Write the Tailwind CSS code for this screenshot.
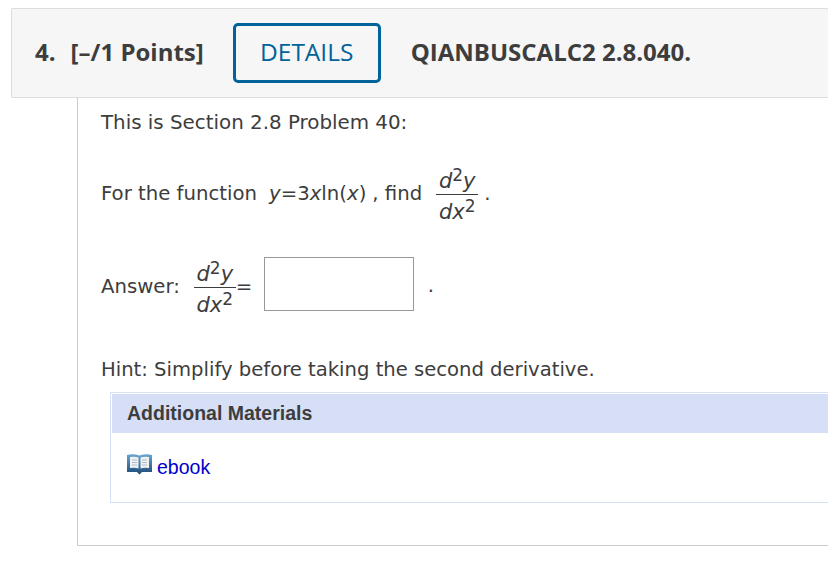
<!DOCTYPE html>
<html lang="en">
<head>
  <meta charset="UTF-8">
  <title>Question 4</title>
  <script src="https://cdn.jsdelivr.net/npm/@tailwindcss/browser@4"></script>
</head>

<body class="bg-white overflow-hidden h-[571px] w-[828px] text-[#3d3d3d] font-['DejaVu_Sans',sans-serif]">
  <div class="w-full pt-2 pl-[11px]">
    <header class="h-[90px] bg-[#f6f6f6] border border-r-0 border-[#dddddd] rounded-l-[2px] flex items-center pl-[23px] font-['Open_Sans',sans-serif] font-bold text-[24px]">
      <span class="-mt-[2px]">4.</span>
      <span class="ml-[15px] -mt-[2px]">[–/1 Points]</span>
      <button class="ml-[29px] w-[148px] h-[60px] -mt-[1px] border-[3px] border-[#00639a] rounded-[5px] text-[#00639a] font-normal text-[24.5px]">DETAILS</button>
      <span class="ml-[30px] -mt-[2px]">QIANBUSCALC2 2.8.040.</span>
    </header>

    <main class="ml-[66px] h-[448px] border-l border-b border-[#cccccc] pl-[23px] text-[19.7px]">
      <p class="pt-[11px] h-[48px] leading-[28px] text-[19.85px]">This is Section 2.8 Problem 40:</p>

      <div class="mt-[18px] h-[60px] flex items-center">
        <span>For the function</span>
        <span class="ml-[12px]"><i>y</i>=3<i>x</i>ln(<i>x</i>)</span>
        <span class="ml-[6px]">, find</span>
        <span class="ml-[14px] mt-[4px] w-[42px] shrink-0 flex flex-col items-center leading-[26px] text-[21px]">
          <span class="border-b border-[#3d3d3d] w-full text-center"><i>d</i><sup class="text-[17px] top-[-7px]">2</sup><i>y</i></span>
          <span class="pt-[4px]"><i>dx</i><sup class="text-[17px] top-[-7px]">2</sup></span>
        </span>
        <span class="ml-[6px]">.</span>
      </div>

      <div class="mt-[30px] h-[60px] flex items-center">
        <span class="mt-[6px]">Answer:</span>
        <span class="ml-[14px] mt-[10px] w-[42px] shrink-0 flex flex-col items-center leading-[26px] text-[21px]">
          <span class="border-b border-[#3d3d3d] w-full text-center"><i>d</i><sup class="text-[17px] top-[-7px]">2</sup><i>y</i></span>
          <span class="pt-[4px]"><i>dx</i><sup class="text-[17px] top-[-7px]">2</sup></span>
        </span>
        <span class="mt-[6px] w-[14px]">=</span>
        <input type="text" class="ml-[14px] w-[150px] h-[54px] border border-[#999999] bg-white">
        <span class="ml-[14px] mt-[4px]">.</span>
      </div>

      <p class="mt-[42px] h-[28px] leading-[28px] text-[19.6px]">Hint: Simplify before taking the second derivative.</p>

      <section class="mt-[8px] ml-[9px] h-[111px] border border-r-0 border-[#d8e0f5] py-[1px] pl-[1px] font-['Liberation_Sans',sans-serif]">
        <h2 class="h-[39px] bg-[#d6dff6] pl-[15px] leading-[39px] font-bold text-[19.5px]">Additional Materials</h2>
        <a href="#" class="mt-[20px] ml-[15px] flex items-center text-[#0000cc] text-[19.5px]">
          <svg width="25" height="21" viewBox="0 0 25 21" class="mr-[5px] -mt-[7px]">
            <defs>
              <linearGradient id="bookCover" x1="0" y1="0" x2="0" y2="1">
                <stop offset="0" stop-color="#6aa5d2"/>
                <stop offset="1" stop-color="#1c4a75"/>
              </linearGradient>
            </defs>
            <path d="M0 1 Q6 -0.5 12.5 1.5 Q19 -0.5 25 1 V18 H15 L12.5 20.5 L10 18 H0 Z" fill="url(#bookCover)"/>
            <path d="M3 3 Q8 2.2 11.5 3.5 V14.5 Q8 13.2 3 14 Z M13.5 3.5 Q17 2.2 22 3 V14 Q17 13.2 13.5 14.5 Z" fill="#eef2f4"/>
            <path d="M5 6 H10 M5 8.5 H10 M5 11 H10 M15 6 H20 M15 8.5 H20 M15 11 H20" stroke="#b4bec6" stroke-width="1"/>
          </svg>
          ebook
        </a>
      </section>
    </main>
  </div>
</body>
</html>
